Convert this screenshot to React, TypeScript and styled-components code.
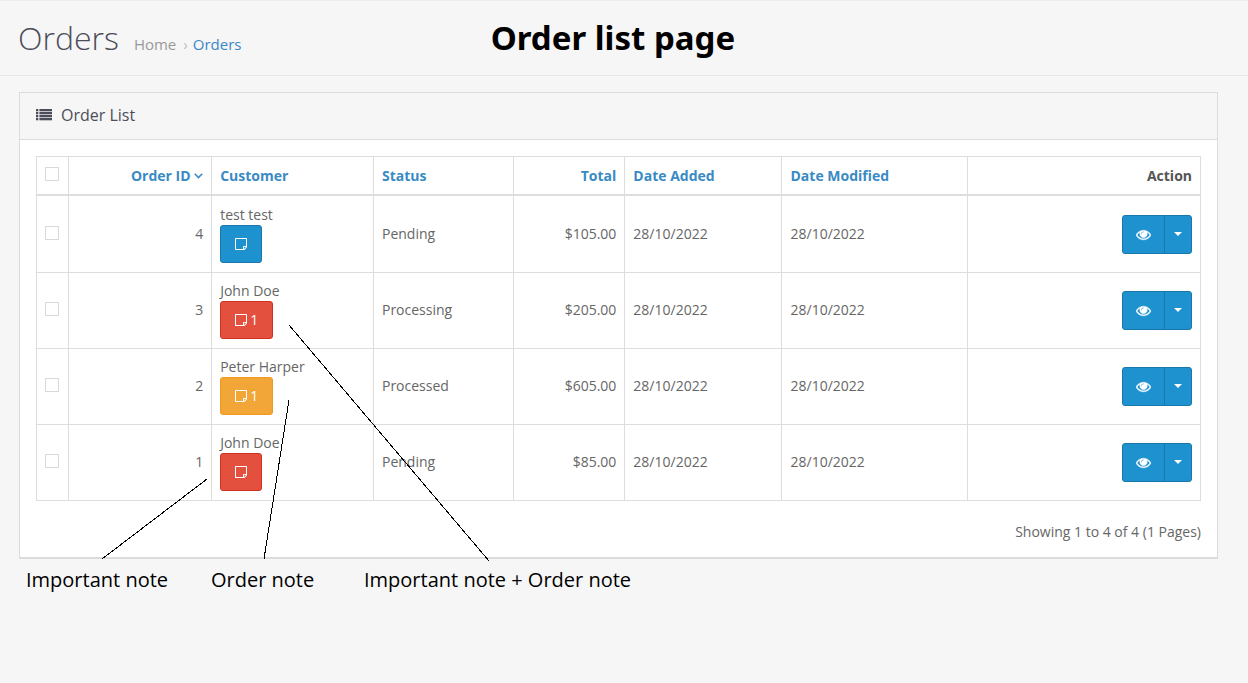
import React from "react";
import styled, { createGlobalStyle } from "styled-components";

const GlobalStyle = createGlobalStyle`
  * { box-sizing: border-box; }
  body {
    margin: 0;
    background: #f6f6f6;
    color: #666;
    font-family: "Open Sans", "Noto Sans", sans-serif;
    font-size: 14px;
    line-height: 20px;
  }
  a { color: #1e91cf; text-decoration: none; }
  button { font: inherit; cursor: pointer; }
`;

const Page = styled.div`
  position: relative;
  min-height: 100vh;
`;

const PageHeader = styled.header`
  display: grid;
  grid-template-columns: 39% 1fr;
  align-items: center;
  height: 76px;
  padding: 0 18px;
  border-top: 1px solid #eee;
  border-bottom: 1px solid #e7e7e7;
`;

const Heading = styled.div`
  display: flex;
  align-items: baseline;
  gap: 15px;
`;

const Title = styled.h1`
  margin: 0;
  color: #4c4d5a;
  font-size: 32px;
  font-weight: 300;
  line-height: 40px;
`;

const Breadcrumb = styled.nav`
  display: flex;
  align-items: baseline;
  gap: 7px;
  font-size: 15px;
`;

const Crumb = styled.a<{ $current?: boolean }>`
  color: ${(p) => (p.$current ? "#3a87c8" : "#999")};
`;

const Separator = styled.span`
  margin-right: -2px;
  color: #bbb;
`;

const Caption = styled.h2`
  margin: 0;
  color: #000;
  font-family: "Noto Sans", "Open Sans", sans-serif;
  font-size: 33px;
  font-weight: 700;
  line-height: 40px;
`;

const Panel = styled.section`
  margin: 16px 30px 0 19px;
  border: 1px solid #dcdcdc;
  border-bottom-width: 2px;
  background: #fff;
`;

const PanelHeading = styled.div`
  display: flex;
  align-items: center;
  gap: 9px;
  height: 47px;
  padding: 0 16px 2px;
  border-bottom: 1px solid #dcdcdc;
  background: #f6f6f6;
  color: #4c4d5a;
`;

const PanelTitle = styled.h3`
  margin: 0;
  font-size: 16px;
  font-weight: 400;
  line-height: 20px;
`;

const PanelBody = styled.div`
  padding: 16px 16px 15px;
`;

const Table = styled.table`
  width: 100%;
  table-layout: fixed;
  border-collapse: separate;
  border-spacing: 0;
  border: solid #ddd;
  border-width: 1px 0 0 1px;
`;

const Col = styled.col<{ $width: string }>`
  width: ${(p) => p.$width};
`;

const HeadCell = styled.th<{ $right?: boolean }>`
  height: 39px;
  padding: 0 8px;
  border: solid #ddd;
  border-width: 0 1px 2px 0;
  color: #555;
  font-weight: 700;
  text-align: ${(p) => (p.$right ? "right" : "left")};
  white-space: nowrap;

  a { color: #3a8ac4; }
`;

const Cell = styled.td<{ $right?: boolean }>`
  padding: 8px 8px 9px;
  border: solid #ddd;
  border-width: 0 1px 1px 0;
  text-align: ${(p) => (p.$right ? "right" : "left")};
  vertical-align: middle;

  tr:first-child > & { padding-top: 9px; }
`;

const Checkbox = styled.input`
  display: block;
  width: 14px;
  height: 14px;
  margin: 0 0 3px;
  border: 1px solid #d9d9d9;
  background: #fff;
  appearance: none;
`;

type Tone = "primary" | "danger" | "warning";

const tones: Record<Tone, [string, string]> = {
  primary: ["#1e91cf", "#1978ab"],
  danger: ["#e3503e", "#d0321f"],
  warning: ["#f3a638", "#ee9a1f"],
};

const Button = styled.button<{ $tone: Tone }>`
  display: inline-flex;
  align-items: center;
  justify-content: center;
  gap: 3px;
  height: 38px;
  padding: 0 14px;
  border: 1px solid ${(p) => tones[p.$tone][1]};
  border-radius: 3px;
  background: ${(p) => tones[p.$tone][0]};
  color: #fff;
  font-weight: 500;
`;

const Customer = styled.div`
  display: flex;
  flex-direction: column;
  align-items: flex-start;
`;

const ButtonGroup = styled.div`
  display: inline-flex;
  vertical-align: middle;
`;

const ViewButton = styled(Button)`
  width: 43px;
  height: 39px;
  padding: 0;
  border-radius: 3px 0 0 3px;
`;

const MenuButton = styled(Button)`
  width: 28px;
  height: 39px;
  margin-left: -1px;
  padding: 0;
  border-radius: 0 3px 3px 0;
`;

const Results = styled.p`
  margin: 21px 0 0;
  text-align: right;
`;

const Labels = styled.div`
  display: grid;
  grid-template-columns: 185px 153px auto;
  padding: 7px 26px;
  color: #000;
  font-size: 20px;
  line-height: 28px;
`;

const Label = styled.span`
  white-space: nowrap;
`;

const Pointers = styled.svg`
  position: absolute;
  top: 0;
  left: 0;
  pointer-events: none;
`;

const ListIcon = () => (
  <svg width="16" height="14" viewBox="0 0 16 14" fill="currentColor" aria-hidden="true">
    {[0, 3, 6, 9].map((y) => (
      <React.Fragment key={y}>
        <rect x="0" y={y + 1} width="2.3" height="2.3" />
        <rect x="3.4" y={y + 1} width="12.6" height="2.3" />
      </React.Fragment>
    ))}
  </svg>
);

const NoteIcon = () => (
  <svg width="12" height="14" viewBox="0 0 1536 1792" fill="currentColor" aria-hidden="true">
    <path d="M1400 1280h-248v248q29-10 41-22l185-185q12-12 22-41zM1120 1152h288V256H128v1280h896v-288q0-40 28-68t68-28zM1536 224v1024q0 40-20 88t-48 76l-184 184q-28 28-76 48t-88 20H96q-40 0-68-28t-28-68V224q0-40 28-68t68-28h1344q40 0 68 28t28 68z" />
  </svg>
);

const EyeIcon = () => (
  <svg width="15" height="15" viewBox="0 0 1792 1792" fill="currentColor" stroke="currentColor" strokeWidth="50" aria-hidden="true">
    <path d="M1664 960q-152-236-381-353 61 104 61 225 0 185-131.500 316.500t-316.500 131.500-316.500-131.500-131.500-316.500q0-121 61-225-229 117-381 353 133 205 333.500 326.500t434.500 121.500 434.500-121.500 333.500-326.500zm-720-384q0-20-14-34t-34-14q-125 0-214.500 89.500t-89.500 214.500q0 20 14 34t34 14 34-14 14-34q0-86 61-147t147-61q20 0 34-14t14-34zm848 384q0 34-20 69-140 230-376.500 368.500t-499.500 138.500-499.500-139-376.500-368q-20-35-20-69t20-69q140-229 376.500-368t499.500-139 499.500 139 376.500 368q20 35 20 69z" />
  </svg>
);

const CaretIcon = () => (
  <svg width="8" height="4" viewBox="0 0 8 4" fill="currentColor" aria-hidden="true">
    <path d="M0 0h8L4 4z" />
  </svg>
);

const SortIcon = () => (
  <svg width="9" height="8" viewBox="0 0 9 8" fill="none" stroke="currentColor" strokeWidth="1.6" aria-hidden="true">
    <path d="M.8.8 4.500 4.500 8.200.8" />
  </svg>
);

interface Order {
  id: number;
  customer: string;
  tone: Tone;
  notes?: number;
  status: string;
  total: string;
  date: string;
}

const orders: Order[] = [
  { id: 4, customer: "test test", tone: "primary", status: "Pending", total: "$105.00", date: "28/10/2022" },
  { id: 3, customer: "John Doe", tone: "danger", notes: 1, status: "Processing", total: "$205.00", date: "28/10/2022" },
  { id: 2, customer: "Peter Harper", tone: "warning", notes: 1, status: "Processed", total: "$605.00", date: "28/10/2022" },
  { id: 1, customer: "John Doe", tone: "danger", status: "Pending", total: "$85.00", date: "28/10/2022" },
];

const columns = ["32px", "12.3%", "13.9%", "12%", "9.6%", "13.5%", "15.9%", "auto"];

export default function App() {
  return (
    <Page>
      <GlobalStyle />
      <PageHeader>
        <Heading>
          <Title>Orders</Title>
          <Breadcrumb aria-label="Breadcrumb">
            <Crumb href="#home">Home</Crumb>
            <Separator>›</Separator>
            <Crumb href="#orders" $current>Orders</Crumb>
          </Breadcrumb>
        </Heading>
        <Caption>Order list page</Caption>
      </PageHeader>

      <Panel>
        <PanelHeading>
          <ListIcon />
          <PanelTitle>Order List</PanelTitle>
        </PanelHeading>
        <PanelBody>
          <Table>
            <colgroup>
              {columns.map((width, i) => <Col key={i} $width={width} />)}
            </colgroup>
            <thead>
              <tr>
                <HeadCell><Checkbox type="checkbox" aria-label="Select all orders" /></HeadCell>
                <HeadCell $right><a href="#id">Order ID <SortIcon /></a></HeadCell>
                <HeadCell><a href="#customer">Customer</a></HeadCell>
                <HeadCell><a href="#status">Status</a></HeadCell>
                <HeadCell $right><a href="#total">Total</a></HeadCell>
                <HeadCell><a href="#added">Date Added</a></HeadCell>
                <HeadCell><a href="#modified">Date Modified</a></HeadCell>
                <HeadCell $right>Action</HeadCell>
              </tr>
            </thead>
            <tbody>
              {orders.map((order) => (
                <tr key={order.id}>
                  <Cell><Checkbox type="checkbox" aria-label={`Select order ${order.id}`} /></Cell>
                  <Cell $right>{order.id}</Cell>
                  <Cell>
                    <Customer>
                      {order.customer}
                      <Button $tone={order.tone} aria-label="Order notes">
                        <NoteIcon />
                        {order.notes}
                      </Button>
                    </Customer>
                  </Cell>
                  <Cell>{order.status}</Cell>
                  <Cell $right>{order.total}</Cell>
                  <Cell>{order.date}</Cell>
                  <Cell>{order.date}</Cell>
                  <Cell $right>
                    <ButtonGroup>
                      <ViewButton $tone="primary" aria-label="View"><EyeIcon /></ViewButton>
                      <MenuButton $tone="primary" aria-label="More actions"><CaretIcon /></MenuButton>
                    </ButtonGroup>
                  </Cell>
                </tr>
              ))}
            </tbody>
          </Table>
          <Results>Showing 1 to 4 of 4 (1 Pages)</Results>
        </PanelBody>
      </Panel>

      <Labels>
        <Label>Important note</Label>
        <Label>Order note</Label>
        <Label>Important note + Order note</Label>
      </Labels>

      <Pointers width="500" height="570" stroke="#000" shapeRendering="crispEdges" aria-hidden="true">
        <path d="M207 479 102 559M289 400 264 559M289 325 489 561" />
      </Pointers>
    </Page>
  );
}
